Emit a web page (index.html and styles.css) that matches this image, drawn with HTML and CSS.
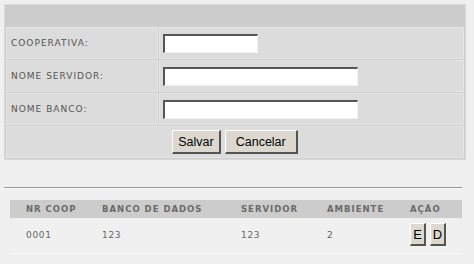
FILE: index.html
```html
<!DOCTYPE html>
<html>
<head>
<meta charset="utf-8">
<link rel="stylesheet" href="styles.css">
</head>
<body>
<div class="page">
  <table class="form">
    <tr><td class="head" colspan="2"></td></tr>
    <tr>
      <td class="label">COOPERATIVA:</td>
      <td class="field"><input class="inp short" type="text"></td>
    </tr>
    <tr>
      <td class="label">NOME SERVIDOR:</td>
      <td class="field"><input class="inp long" type="text"></td>
    </tr>
    <tr>
      <td class="label">NOME BANCO:</td>
      <td class="field"><input class="inp long" type="text"></td>
    </tr>
    <tr>
      <td class="actions" colspan="2">
        <button class="btn save">Salvar</button><button class="btn cancel">Cancelar</button>
      </td>
    </tr>
  </table>
  <div class="rule"></div>
  <table class="list">
    <tr class="lh">
      <th class="c1">NR COOP</th>
      <th class="c2">BANCO DE DADOS</th>
      <th class="c3">SERVIDOR</th>
      <th class="c4">AMBIENTE</th>
      <th class="c5">AÇÃO</th>
    </tr>
    <tr class="lr">
      <td class="c1">0001</td>
      <td class="c2">123</td>
      <td class="c3">123</td>
      <td class="c4">2</td>
      <td class="c5"><button class="sbtn">E</button><button class="sbtn">D</button></td>
    </tr>
  </table>
</div>
</body>
</html>
```
FILE: styles.css
```css
html, body {
  margin: 0;
  padding: 0;
  background: #f0f0f0;
}
.page {
  padding: 4px 0 0 4px;
  width: 462px;
  font-family: "DejaVu Sans", Verdana, sans-serif;
}
.form {
  width: 462px;
  border-collapse: separate;
  border-spacing: 1px;
  background: #cfcfcf;
  border: 1px solid #d8d8d8;
}
.form td {
  background: #dcdcdc;
  border: 1px solid #e4e4e4;
  padding: 0;
}
.form td.head {
  height: 18px;
  background: #cccccc;
  border-color: #cccccc;
}
.form td.label {
  width: 146px;
  height: 30px;
  padding-left: 4px;
  font-size: 9px;
  letter-spacing: 1px;
  color: #555;
}
.form td.field {
  padding-left: 3px;
}
.inp {
  display: block;
  height: 16px;
  padding: 0 2px;
  margin: 0;
  background: #fff;
  border-style: solid;
  border-width: 2px 1px 1px 2px;
  border-color: #555 #f0f0f0 #f0f0f0 #555;
  box-sizing: content-box;
}
.inp.short { width: 88px; }
.inp.long { width: 188px; }
.form td.actions {
  height: 30px;
  text-align: center;
  padding-left: 0;
}
.btn {
  font-family: "Liberation Sans", Arial, sans-serif;
  font-size: 12.5px;
  color: #000;
  background: #dcd8d0;
  border-style: solid;
  border-width: 1px 2px 2px 1px;
  border-color: #fff #555 #555 #fff;
  height: 24px;
  padding: 0 5px;
  margin: 0 2px;
  vertical-align: middle;
}
.btn.cancel { padding: 0 10px; }
.rule {
  margin-top: 27px;
  width: 458px;
  height: 1px;
  background: #999;
  border-bottom: 1px solid #fafafa;
}
.list {
  margin: 11px 0 0 6px;
  width: 452px;
  border-collapse: collapse;
  border-bottom: 1px solid #f8f8f8;
}
.list th {
  background: #cccccc;
  height: 18px;
  padding: 0;
  text-align: left;
  font-size: 8.5px;
  font-weight: bold;
  letter-spacing: 1px;
  color: #6a6a6a;
}
.list td {
  height: 33px;
  padding: 0 0 2px 0;
  font-size: 9px;
  color: #666;
  letter-spacing: 0.7px;
}
.list .c1 { width: 76px; padding-left: 16px; }
.c2 { width: 139px; }
.c3 { width: 86px; }
.c4 { width: 83px; }
.c5 { padding-left: 0; }
.sbtn {
  font-family: "Liberation Sans", Arial, sans-serif;
  font-size: 13px;
  color: #000;
  background: #dcd8d0;
  border-style: solid;
  border-width: 1px 2px 2px 1px;
  border-color: #fff #555 #555 #fff;
  width: 16px;
  height: 23px;
  padding: 0;
  margin: 0 4px 0 0;
  vertical-align: middle;
}
```
